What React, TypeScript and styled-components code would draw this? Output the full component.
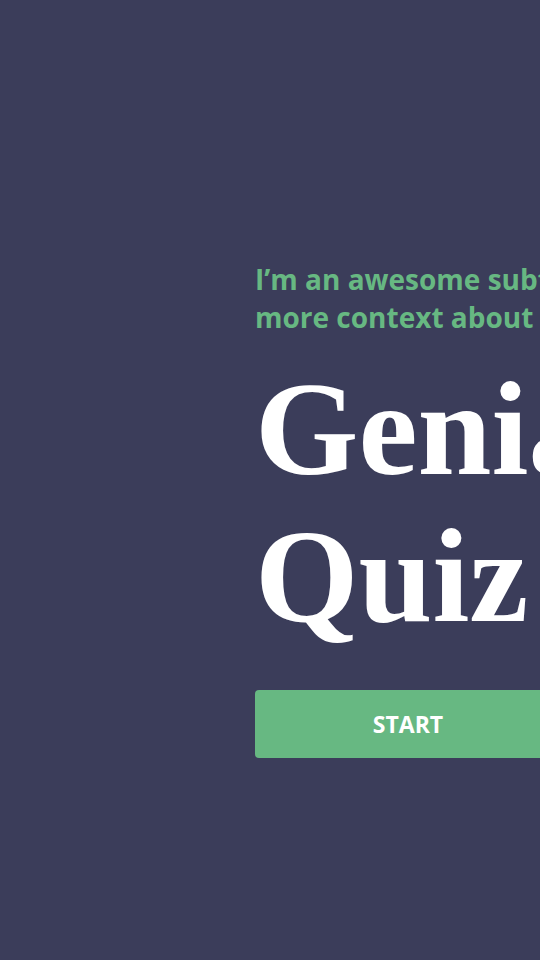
import styled, { createGlobalStyle } from "styled-components";

const GlobalStyle = createGlobalStyle`
  html, body {
    margin: 0;
    padding: 0;
    background-color: #3b3d5a;
    overflow: hidden;
  }
`;

const Page = styled.main`
  box-sizing: border-box;
  width: 540px;
  height: 960px;
  padding-top: 56px;
  overflow: hidden;
  background-color: #3b3d5a;
  display: flex;
  align-items: center;
`;

const Intro = styled.section`
  display: flex;
  flex-direction: column;
  align-items: flex-start;
  padding-left: 255px;
  flex-shrink: 0;
`;

const Subtitle = styled.p`
  margin: 0;
  padding-top: 2px;
  color: #67b882;
  font-family: "Open Sans", Lato, sans-serif;
  font-weight: 700;
  font-size: 28px;
  line-height: 38px;
  white-space: nowrap;
`;

const Title = styled.h1`
  margin: 20px 0 0;
  color: #ffffff;
  font-family: "Liberation Serif", serif;
  font-weight: 700;
  font-size: 133px;
  line-height: 147px;
  white-space: nowrap;
`;

const StartButton = styled.button`
  margin-top: 40px;
  width: 306px;
  height: 68px;
  border: none;
  border-radius: 4px;
  background-color: #67b882;
  color: #ffffff;
  font-family: "Open Sans", Lato, sans-serif;
  font-weight: 700;
  font-size: 23px;
  cursor: pointer;
`;

export default function App() {
  return (
    <>
      <GlobalStyle />
      <Page>
        <Intro>
          <Subtitle>
            I’m an awesome subtitle that gives
            <br />
            more context about the quiz
          </Subtitle>
          <Title>
            Genial
            <br />
            Quiz
          </Title>
          <StartButton>START</StartButton>
        </Intro>
      </Page>
    </>
  );
}
